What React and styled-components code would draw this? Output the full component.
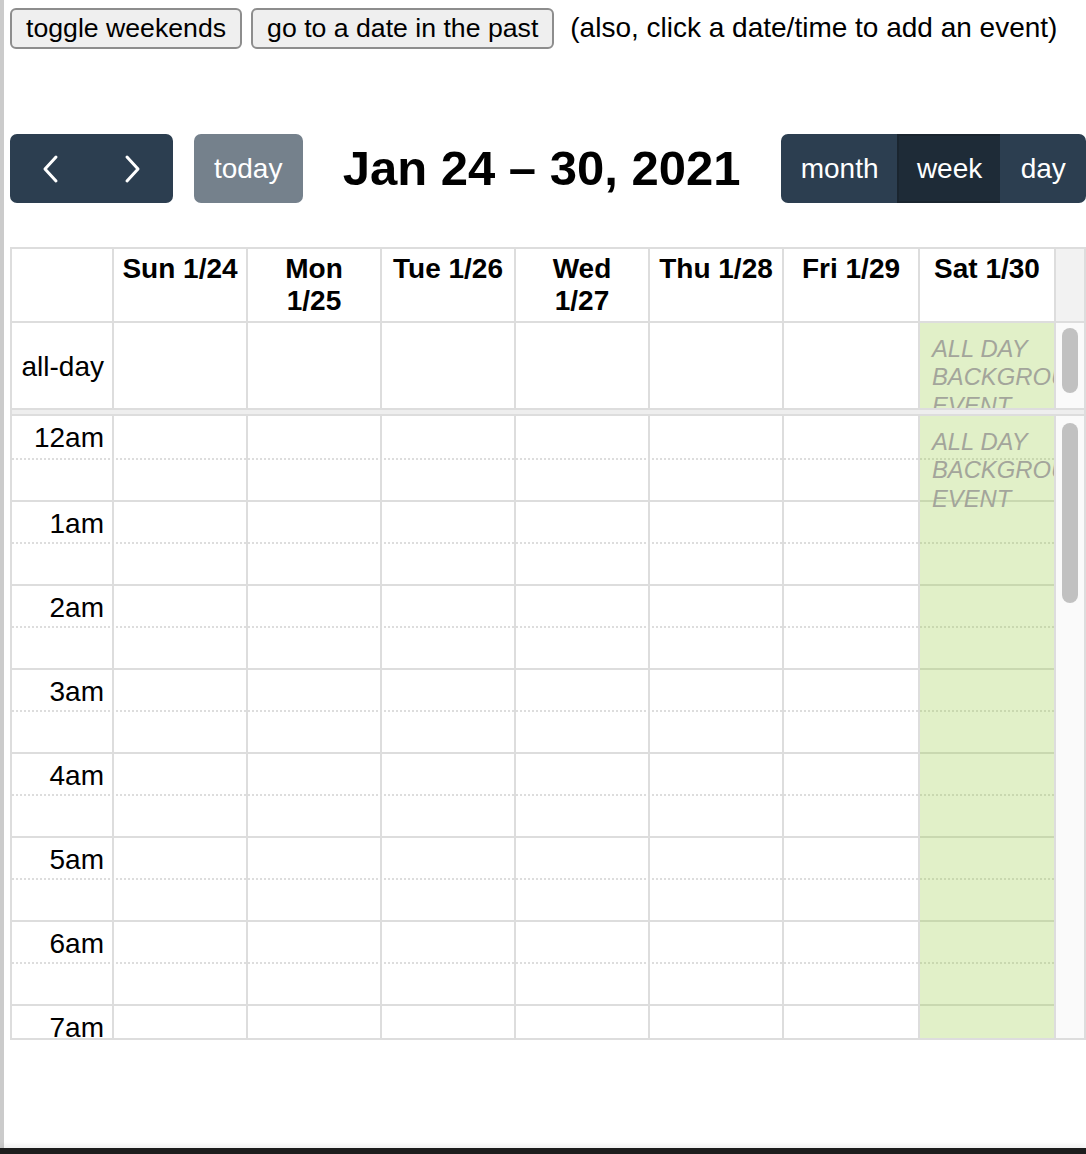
import React from "react";
import styled, { createGlobalStyle, css } from "styled-components";

const GlobalStyle = createGlobalStyle`
  html, body { margin: 0; padding: 0; background: #fff; }
  body {
    font-family: "Liberation Sans", Arial, Helvetica, sans-serif;
    font-size: 28px;
    color: #000;
  }
  *, *::before, *::after { box-sizing: border-box; }
`;

const BORDER = "#dddddd";
const COLS = "100px repeat(5, 134px) 136px 136px";

const Page = styled.div`
  width: 1086px;
  height: 1154px;
  display: flex;
  flex-direction: column;
  overflow: hidden;
`;

const Main = styled.div`
  flex: 1;
  min-height: 0;
  border-left: 4px solid #cbcbcb;
  padding: 8px 0 0 6px;
`;

const BottomBar = styled.div`
  height: 6px;
  flex-shrink: 0;
  background: #1d1d1d;
  box-shadow: 0 -3px 4px rgba(0, 0, 0, 0.06);
`;

const TopBar = styled.div`
  display: flex;
  align-items: baseline;
`;

const PlainButton = styled.button`
  font-family: "Liberation Sans", Arial, sans-serif;
  font-size: 26.67px;
  line-height: normal;
  padding: 3px 14px;
  border: 2px solid #8d8d8d;
  border-radius: 6px;
  background: #efefef;
  color: #000;
  margin: 0 ${(p) => p.$gap}px 0 0;
  cursor: pointer;
`;

const Hint = styled.span`
  font-size: 28px;
`;

const Toolbar = styled.div`
  margin-top: 85px;
  margin-bottom: 44px;
  display: flex;
  justify-content: space-between;
  align-items: center;
`;

const Chunk = styled.div`
  display: flex;
  align-items: center;
`;

const ButtonGroup = styled.div`
  display: flex;
  margin-left: ${(p) => p.$ml || 0}px;
`;

const radius = {
  single: "7px",
  first: "7px 0 0 7px",
  middle: "0",
  last: "0 7px 7px 0",
};

const FcButton = styled.button`
  font-family: "Liberation Sans", Arial, sans-serif;
  font-size: 28px;
  line-height: 42px;
  height: 69px;
  padding: 0 18.2px;
  border: 2px solid ${(p) => (p.$active ? "#1a252f" : "#2c3e50")};
  background: ${(p) => (p.$active ? "#1e2b37" : "#2c3e50")};
  color: #fff;
  border-radius: ${(p) => radius[p.$pos || "single"]};
  display: flex;
  align-items: center;
  cursor: pointer;
  ${(p) =>
    p.$pos && p.$pos !== "first" && p.$pos !== "single"
      ? css`margin-left: -2px;`
      : ""}
  ${(p) =>
    p.$dim &&
    css`
      opacity: 0.65;
    `}
`;

const Chevron = styled.svg`
  display: block;
  width: 42px;
  height: 42px;
`;

const Title = styled.h2`
  margin: 0;
  font-size: 49px;
  font-weight: bold;
  line-height: 1.15;
`;

const Table = styled.div`
  width: 1076px;
  border: 2px solid ${BORDER};
`;

const Section = styled.div`
  display: flex;
  height: ${(p) => p.$h}px;
  overflow: hidden;
  ${(p) => p.$bottomBorder && css`border-bottom: 2px solid ${BORDER};`}
`;

const Row = styled.div`
  display: grid;
  grid-template-columns: ${COLS};
  flex-shrink: 0;
`;

const HeaderCell = styled.div`
  border-left: ${(p) => (p.$axis ? "none" : `2px solid ${BORDER}`)};
  text-align: center;
  padding: 4px 8px;
  font-weight: bold;
  line-height: 32px;
  white-space: nowrap;
`;

const AxisCell = styled.div`
  display: flex;
  align-items: center;
  justify-content: flex-end;
  padding: 2px 8px 0;
  line-height: 32px;
`;

const DayCell = styled.div`
  border-left: 2px solid ${BORDER};
  overflow: hidden;
  background: ${(p) => p.$bg || "transparent"};
`;

const BgTitle = styled.div`
  margin: 11.9px;
  font-size: 23.8px;
  line-height: 28.5px;
  font-style: italic;
  color: #a3a59b;
`;

const Gutter = styled.div`
  flex: 1;
  border-left: 2px solid ${BORDER};
  background: ${(p) => p.$bg};
  padding: ${(p) => p.$pt || 0}px 6px 0;
`;

const Thumb = styled.div`
  height: ${(p) => p.$h}px;
  width: 16px;
  border-radius: 8px;
  background: #c1c1c1;
`;

const Divider = styled.div`
  height: 8px;
  border-top: 2px solid ${BORDER};
  border-bottom: 2px solid ${BORDER};
  background: #eeeeee;
`;

const TimeGrid = styled.div`
  display: grid;
  grid-template-columns: ${COLS};
  grid-template-rows: repeat(15, 42px);
  flex-shrink: 0;
`;

const SlotRow = styled.div`
  grid-column: 1 / -1;
  grid-row: ${(p) => p.$row};
  border-top: ${(p) =>
    p.$first ? "none" : `2px ${p.$minor ? "dotted" : "solid"} ${BORDER}`};
  display: flex;
`;

const SlotLabel = styled.div`
  width: 100px;
  text-align: right;
  padding: 6px 8px 0;
  line-height: 32px;
  white-space: nowrap;
`;

const DayColumn = styled.div`
  grid-row: 1 / -1;
  grid-column: ${(p) => p.$col};
  border-left: 2px solid ${BORDER};
  overflow: hidden;
  background: ${(p) => p.$bg || "transparent"};
`;

const GREEN = "rgba(155, 205, 72, 0.3)";

const days = [
  { lines: ["Sun 1/24"] },
  { lines: ["Mon", "1/25"] },
  { lines: ["Tue 1/26"] },
  { lines: ["Wed", "1/27"] },
  { lines: ["Thu 1/28"] },
  { lines: ["Fri 1/29"] },
  { lines: ["Sat 1/30"], bg: true },
];

const hours = ["12am", "1am", "2am", "3am", "4am", "5am", "6am", "7am"];
const slots = Array.from({ length: 15 }, (_, i) => ({
  label: i % 2 === 0 ? hours[i / 2] : "",
  minor: i % 2 === 1,
}));

const ChevronIcon = ({ dir }) => (
  <Chevron viewBox="0 0 42 42">
    <polyline
      points={dir === "left" ? "26,9 15,21 26,33" : "16,9 27,21 16,33"}
      fill="none"
      stroke="#fff"
      strokeWidth="3"
      strokeLinecap="round"
      strokeLinejoin="round"
    />
  </Chevron>
);

export default function App() {
  return (
    <Page>
      <GlobalStyle />
      <Main>
        <TopBar>
          <PlainButton $gap={9}>toggle weekends</PlainButton>
          <PlainButton $gap={16}>go to a date in the past</PlainButton>
          <Hint>(also, click a date/time to add an event)</Hint>
        </TopBar>

        <Toolbar>
          <Chunk>
            <ButtonGroup>
              <FcButton $pos="first" aria-label="prev">
                <ChevronIcon dir="left" />
              </FcButton>
              <FcButton $pos="last" aria-label="next">
                <ChevronIcon dir="right" />
              </FcButton>
            </ButtonGroup>
            <ButtonGroup $ml={21}>
              <FcButton $dim>today</FcButton>
            </ButtonGroup>
          </Chunk>
          <Title>Jan 24 – 30, 2021</Title>
          <Chunk>
            <ButtonGroup>
              <FcButton $pos="first">month</FcButton>
              <FcButton $pos="middle" $active>
                week
              </FcButton>
              <FcButton $pos="last">day</FcButton>
            </ButtonGroup>
          </Chunk>
        </Toolbar>

        <Table>
          <Section $h={74} $bottomBorder>
            <Row>
              <HeaderCell $axis />
              {days.map((d, i) => (
                <HeaderCell key={i}>
                  {d.lines.map((l, j) => (
                    <div key={j}>{l}</div>
                  ))}
                </HeaderCell>
              ))}
            </Row>
            <Gutter $bg="#f2f2f2" />
          </Section>

          <Section $h={85}>
            <Row>
              <AxisCell>all-day</AxisCell>
              {days.map((d, i) => (
                <DayCell key={i} $bg={d.bg ? GREEN : undefined}>
                  {d.bg && <BgTitle>ALL DAY BACKGROUND EVENT</BgTitle>}
                </DayCell>
              ))}
            </Row>
            <Gutter $bg="#fafafa" $pt={5}>
              <Thumb $h={65} />
            </Gutter>
          </Section>

          <Divider />

          <Section $h={622}>
            <TimeGrid>
              {slots.map((s, i) => (
                <SlotRow key={i} $row={i + 1} $first={i === 0} $minor={s.minor}>
                  <SlotLabel>{s.label}</SlotLabel>
                </SlotRow>
              ))}
              {days.map((d, i) => (
                <DayColumn key={i} $col={i + 2} $bg={d.bg ? GREEN : undefined}>
                  {d.bg && <BgTitle>ALL DAY BACKGROUND EVENT</BgTitle>}
                </DayColumn>
              ))}
            </TimeGrid>
            <Gutter $bg="#fafafa" $pt={7}>
              <Thumb $h={180} />
            </Gutter>
          </Section>
        </Table>
      </Main>
      <BottomBar />
    </Page>
  );
}
